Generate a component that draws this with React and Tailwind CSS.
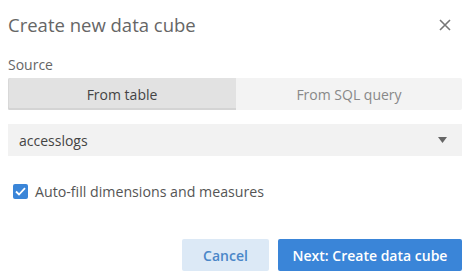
import { useState } from "react";

const App = () => {
  const [source, setSource] = useState("table");
  const [autoFill, setAutoFill] = useState(true);

  return (
    <div
      className="h-[277px] w-[474px] bg-white pl-2 pr-3 pt-[11px] text-[#555]"
      style={{ fontFamily: '"Open Sans", sans-serif' }}
    >
      <div className="flex items-center justify-between">
        <h1 className="text-[18.5px] font-normal leading-[28px] text-[#666]">Create new data cube</h1>
        <button className="mr-[5px] flex h-6 w-6 items-center justify-center text-[#777]">
          <svg width="12" height="12" viewBox="0 0 12 12" stroke="currentColor" strokeWidth="1.6">
            <path d="M1 1L11 11M11 1L1 11" />
          </svg>
        </button>
      </div>

      <p className="mt-[17px] text-[14px] leading-[18px] text-[#666]">Source</p>

      <div className="mt-[4px] grid h-[32px] grid-cols-[228px_1fr] text-[14px]">
        <button
          onClick={() => setSource("table")}
          className={`rounded-l-[2px] ${
            source === "table"
              ? "bg-[#e2e2e2] text-[#444] shadow-[inset_0_-2px_0_#d4d4d4,inset_1px_0_0_#d8d8d8]"
              : "bg-[#f3f3f3] text-[#888]"
          }`}
        >
          From table
        </button>
        <button
          onClick={() => setSource("sql")}
          className={`rounded-r-[2px] ${
            source === "sql"
              ? "bg-[#e2e2e2] text-[#444] shadow-[inset_0_-2px_0_#d4d4d4]"
              : "bg-[#f3f3f3] text-[#888]"
          }`}
        >
          From SQL query
        </button>
      </div>

      <div className="mt-[14px] flex h-[32px] items-center justify-between bg-[#f2f2f2] pl-[11px] pr-[15px] text-[14px] text-[#444]">
        <span>accesslogs</span>
        <svg width="9" height="6" viewBox="0 0 9 6" fill="#666">
          <path d="M0 0H9L4.5 6Z" />
        </svg>
      </div>

      <label className="mt-[25px] flex items-center gap-[7px] pl-[5px] text-[14.2px] text-[#555]">
        <span
          onClick={() => setAutoFill((v) => !v)}
          className={`flex h-[15px] w-[15px] items-center justify-center rounded-[2px] ${
            autoFill ? "bg-[#3a85d8]" : "border border-[#aaa] bg-white"
          }`}
        >
          {autoFill && (
            <svg width="11" height="9" viewBox="0 0 11 9" fill="none" stroke="white" strokeWidth="1.8">
              <path d="M1 4.5L4 7.5L10 1.2" />
            </svg>
          )}
        </span>
        Auto-fill dimensions and measures
      </label>

      <div className="mt-[37px] flex justify-end gap-[9px] text-[14px] font-semibold">
        <button className="h-[32px] w-[87px] rounded-[2px] bg-[#dce9f6] text-[#4a86c8]">Cancel</button>
        <button className="h-[32px] w-[184px] rounded-[2px] bg-[#3a85d8] text-white">Next: Create data cube</button>
      </div>
    </div>
  );
};

export default App;
